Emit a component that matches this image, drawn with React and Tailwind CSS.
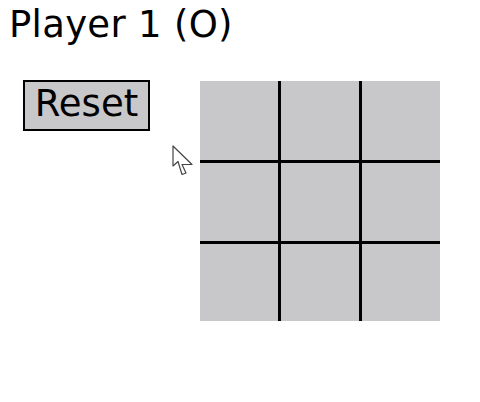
import React from "react";

// Simple tic-tac-toe screen: status line, reset button and an empty board
const FONT = { fontFamily: '"DejaVu Sans", "Liberation Sans", sans-serif' };

function Cursor() {
  return (
    <svg
      className="absolute left-[172px] top-[145px]"
      width="22"
      height="32"
      viewBox="0 0 22 32"
    >
      <path
        d="M1 1 L1 21 L6 16.5 L10 29.5 L14 28 L10 19.5 L20 19.5 Z"
        fill="#ffffff"
        stroke="#444444"
        strokeWidth="1.2"
        strokeLinejoin="round"
      />
    </svg>
  );
}

function Board() {
  const cells = Array.from({ length: 9 });
  return (
    <div className="grid grid-cols-[78px_78px_78px] grid-rows-[79px_78px_77px] gap-[3px] bg-black w-[240px] h-[240px]">
      {cells.map((_, i) => (
        <div key={i} className="bg-[#c8c7c9]" />
      ))}
    </div>
  );
}

export default function App() {
  return (
    <div className="relative w-[480px] h-[402px] bg-white text-black overflow-hidden" style={FONT}>
      <h1 className="pl-[9px] pt-[6px] text-[37px] leading-none tracking-[0.3px]">
        Player 1 (O)
      </h1>

      <div className="flex items-start gap-[50px] pl-[23px] mt-[37px]">
        <button className="w-[127px] h-[51px] border-2 border-black bg-[#c8c7c9] text-[37px] leading-none flex items-center justify-center pb-[4px]">
          Reset
        </button>
        <div className="mt-[1px]">
          <Board />
        </div>
      </div>

      <Cursor />
    </div>
  );
}
